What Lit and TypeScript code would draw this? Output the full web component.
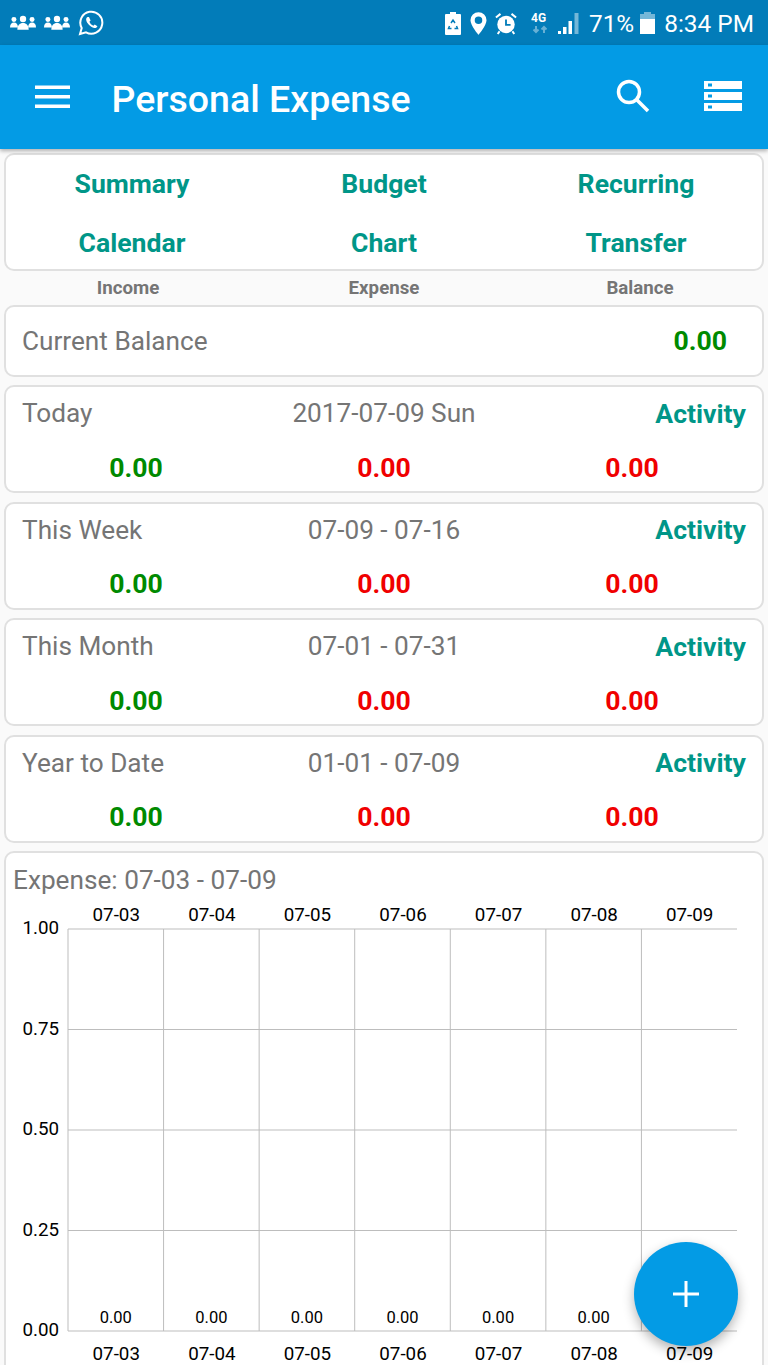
import { LitElement, html, css, svg } from "lit";
import { customElement } from "lit/decorators.js";

const NAV = ["Summary", "Budget", "Recurring", "Calendar", "Chart", "Transfer"];

const PERIODS = [
  { name: "Today", range: "2017-07-09 Sun" },
  { name: "This Week", range: "07-09 - 07-16" },
  { name: "This Month", range: "07-01 - 07-31" },
  { name: "Year to Date", range: "01-01 - 07-09" },
];

const DAYS = ["07-03", "07-04", "07-05", "07-06", "07-07", "07-08", "07-09"];
const TICKS = ["1.00", "0.75", "0.50", "0.25", "0.00"];

// chart coordinates are relative to the svg, which starts at the card's left edge
const PLOT = { left: 64, right: 733, top: 34, bottom: 436 };

const people = (x: number) => svg`
  <g transform="translate(${x} 0)" fill="#fff">
    <circle cx="3.5" cy="4" r="2.2" /><path d="M0 11c0-3 1.5-4.5 3.500-4.500S7 8 7 11z" />
    <circle cx="19.500" cy="4" r="2.200" /><path d="M16 11c0-3 1.500-4.500 3.500-4.500S23 8 23 11z" />
    <circle cx="11.500" cy="3.500" r="2.800" /><path d="M6.500 13c0-4 2-6 5-6s5 2 5 6z" />
  </g>
`;

@customElement("app-root")
export class AppRoot extends LitElement {
  static styles = css`
    :host {
      display: block;
      position: relative;
      width: 768px;
      height: 1365px;
      overflow: hidden;
      background: #fafafa;
      font-family: Roboto, "Liberation Sans", sans-serif;
    }
    .status {
      height: 45px;
      background: #027cb9;
      color: #fff;
      display: flex;
      align-items: center;
      padding: 0 14px 0 10px;
    }
    .status-left {
      display: flex;
      align-items: center;
      gap: 8px;
    }
    .status-right {
      margin-left: auto;
      padding-top: 1px;
      display: flex;
      align-items: center;
      font-size: 24.4px;
      white-space: nowrap;
    }
    .status svg {
      display: block;
    }
    .gap-6 {
      margin-left: 6px;
    }
    .gap-8 {
      margin-left: 8px;
    }
    .gap-9 {
      margin-left: 9px;
    }
    .gap-10 {
      margin-left: 10px;
    }
    .gap-14 {
      margin-left: 14px;
    }
    .toolbar {
      height: 104px;
      background: #039be5;
      color: #fff;
      display: flex;
      align-items: center;
      padding: 0 26px 0 35px;
      box-shadow: 0 2px 4px rgba(0, 0, 0, 0.3);
      position: relative;
    }
    .toolbar h1 {
      margin: 4px 0 0 41.5px;
      font-size: 37.5px;
      font-weight: 500;
      flex: 1;
    }
    .toolbar svg {
      display: block;
    }
    .search {
      margin: 0 54px 3px 0;
    }
    .servers {
      margin-bottom: 2px;
    }
    .content {
      padding: 4px 4px 0;
      display: flex;
      flex-direction: column;
    }
    .card {
      box-sizing: border-box;
      background: #fff;
      border: 2px solid #e0e0e0;
      border-radius: 10px;
    }
    .nav {
      height: 118px;
      display: grid;
      grid-template-columns: repeat(3, 1fr);
      grid-template-rows: 52px 52px;
      row-gap: 7px;
      padding-top: 2px;
      align-items: center;
      justify-items: center;
      color: #009688;
      font-size: 26.6px;
      font-weight: 700;
    }
    .labels {
      height: 34px;
      display: grid;
      grid-template-columns: 248px 264px 248px;
      align-items: center;
      justify-items: center;
      color: #757575;
      font-size: 18.7px;
      font-weight: 700;
    }
    .balance {
      height: 71.5px;
      display: flex;
      align-items: center;
      justify-content: space-between;
      padding: 0 35px 0 16px;
      color: #757575;
      font-size: 26.2px;
    }
    .balance .green {
      font-size: 26.6px;
    }
    .green {
      color: #008a00;
      font-weight: 700;
    }
    .red {
      color: #f00000;
      font-weight: 700;
    }
    .period {
      height: 108px;
      margin-top: 8.5px;
      display: grid;
      grid-template-columns: 1fr 1fr 1fr;
      grid-template-rows: 48px 48px;
      row-gap: 6px;
      padding: 2px 6px 0;
      align-items: center;
      color: #757575;
      font-size: 26.2px;
    }
    .period .activity {
      justify-self: end;
      padding-right: 10px;
      color: #009688;
      font-size: 26.6px;
      font-weight: 700;
    }
    .period .mid {
      justify-self: center;
      white-space: nowrap;
    }
    .period .val {
      justify-self: center;
      font-size: 26.6px;
    }
    .period .name {
      padding-left: 10px;
      white-space: nowrap;
    }
    .chart {
      margin-top: 8.5px;
      height: 540px;
    }
    .chart h2 {
      margin: 0;
      padding: 12px 0 0 7px;
      font-size: 26.2px;
      font-weight: 400;
      color: #757575;
      line-height: 30px;
    }
    .chart svg {
      display: block;
      margin-left: -2px;
      overflow: visible;
    }
    .chart text {
      font-family: Roboto, "Liberation Sans", sans-serif;
      font-size: 18.8px;
      fill: #000;
    }
    .chart .small {
      font-size: 16.5px;
    }
    .fab {
      position: absolute;
      left: 634px;
      top: 1242px;
      width: 104px;
      height: 104px;
      border-radius: 50%;
      background: #039be5;
      box-shadow: 0 5px 12px rgba(0, 0, 0, 0.3);
      display: flex;
      align-items: center;
      justify-content: center;
    }
  `;

  renderChart() {
    const { left, right, top, bottom } = PLOT;
    const step = (right - left) / DAYS.length;
    const rowStep = (bottom - top) / (TICKS.length - 1);
    return svg`
      <svg width="760" height="480">
        ${TICKS.map((t, i) => {
          const y = top + i * rowStep;
          return svg`
            <line x1=${left} x2=${right} y1=${y} y2=${y} stroke="#bdbdbd" />
            <text x="55" y=${y + 5} text-anchor="end">${t}</text>
          `;
        })}
        ${DAYS.map((d, i) => {
          const x = left + i * step;
          const mid = x + step / 2;
          return svg`
            <line x1=${x} x2=${x} y1=${top} y2=${bottom} stroke="#bdbdbd" />
            <text x=${mid + 0.5} y=${top - 8} text-anchor="middle">${d}</text>
            <text x=${mid + 0.5} y=${bottom + 28.5} text-anchor="middle">${d}</text>
            <text class="small" x=${mid} y=${bottom - 8} text-anchor="middle">0.00</text>
          `;
        })}
      </svg>
    `;
  }

  render() {
    return html`
      <div class="status">
        <div class="status-left">
          <svg width="60" height="16" viewBox="0 0 53 14">${people(0)}${people(30)}</svg>
          <svg width="26" height="26" viewBox="0 0 26 26" fill="none" stroke="#fff">
            <path stroke-width="2" d="M2 24l1.700-6A11 11 0 1 1 8 22.300z" />
            <path
              fill="#fff"
              stroke="none"
              d="M9.500 7c-1 .5-1.500 1.500-1.300 3 .5 3 4 7 8 8 1.500.3 2.800-.5 3.200-1.800l-2.700-1.700-1.300 1.200c-1.800-.7-3.300-2.300-4-4l1.200-1.200L11 7z"
            />
          </svg>
        </div>
        <div class="status-right">
          <svg width="16" height="23" viewBox="0 0 16 23">
            <path
              fill="#fff"
              d="M5 0h6v2h4a1 1 0 0 1 1 1v19a1 1 0 0 1-1 1H1a1 1 0 0 1-1-1V3a1 1 0 0 1 1-1h4z"
            />
            <path
              fill="none"
              stroke="#027cb9"
              stroke-width="1.500"
              d="M6 11l2-3 2 3M4.500 14l-1 2.500h3M11.500 14l1 2.500h-3"
            />
          </svg>
          <svg class="gap-9" width="17" height="23" viewBox="0 0 18 24">
            <path
              fill="#fff"
              fill-rule="evenodd"
              d="M9 0a8.500 8.500 0 0 1 8.500 8.500C17.500 14 9 24 9 24S.5 14 .5 8.500A8.500 8.500 0 0 1 9 0zm0 4.500a4 4 0 1 0 0 8 4 4 0 0 0 0-8z"
            />
          </svg>
          <svg class="gap-8" width="22" height="23" viewBox="0 0 24 25">
            <circle cx="12" cy="13.500" r="9.500" fill="#fff" />
            <path d="M12 8v6h5" fill="none" stroke="#027cb9" stroke-width="2" />
            <path
              d="M1 6l5-4M23 6l-5-4M5 21l-2 3M19 21l2 3"
              stroke="#fff"
              stroke-width="2.200"
              fill="none"
            />
          </svg>
          <svg class="gap-14" width="18" height="24" viewBox="0 0 18 24">
            <text x="0" y="11" fill="#fff" font-size="12" font-weight="700" font-family="Roboto">4G</text>
            <path d="M5 15v6M2.500 18.500 5 21l2.500-2.500" stroke="#fff" stroke-opacity=".4" stroke-width="2" fill="none" />
            <path d="M13 22v-6M10.500 18.500 13 16l2.500 2.500" stroke="#fff" stroke-opacity=".4" stroke-width="2" fill="none" />
          </svg>
          <svg class="gap-9" width="21" height="24" viewBox="0 0 21 24">
            <rect x="0" y="20" width="3" height="3" fill="#fff" />
            <rect x="5" y="16" width="3.500" height="7" fill="#fff" />
            <rect x="10.500" y="10" width="3.500" height="13" fill="#fff" />
            <rect x="16.500" y="2" width="4" height="21" fill="#fff" fill-opacity=".45" />
          </svg>
          <span class="gap-10">71%</span>
          <svg class="gap-6" width="15" height="22" viewBox="0 0 15 22">
            <path d="M4 0h7v2h4v5H0V2h4z" fill="#fff" fill-opacity=".45" />
            <rect x="0" y="7" width="15" height="15" fill="#fff" />
          </svg>
          <span class="gap-9">8:34 PM</span>
        </div>
      </div>

      <div class="toolbar">
        <svg width="35" height="24" viewBox="0 0 35 24" fill="#fff">
          <rect y="0.500" width="35" height="3.500" />
          <rect y="10" width="35" height="3.500" />
          <rect y="19.500" width="35" height="3.500" />
        </svg>
        <h1>Personal Expense</h1>
        <svg class="search" width="34" height="34" viewBox="0 0 34 34" fill="none" stroke="#fff">
          <circle cx="13" cy="13" r="10.500" stroke-width="3.500" />
          <path d="M21 21l11 11" stroke-width="3.500" />
        </svg>
        <svg class="servers" width="38" height="30" viewBox="0 0 38 30">
          <g fill="#fff">
            <rect y="0" width="38" height="8" />
            <rect y="11" width="38" height="8" />
            <rect y="22" width="38" height="8" />
          </g>
          <g fill="#039be5">
            <rect x="4" y="2.500" width="4" height="3" />
            <rect x="4" y="13.500" width="4" height="3" />
            <rect x="4" y="24.500" width="4" height="3" />
          </g>
        </svg>
      </div>

      <div class="content">
        <div class="card nav">${NAV.map((n) => html`<span>${n}</span>`)}</div>
        <div class="labels"><span>Income</span><span>Expense</span><span>Balance</span></div>
        <div class="card balance"><span>Current Balance</span><span class="green">0.00</span></div>
        ${PERIODS.map(
          (p) => html`
            <div class="card period">
              <span class="name">${p.name}</span>
              <span class="mid">${p.range}</span>
              <span class="activity">Activity</span>
              <span class="val green">0.00</span>
              <span class="val red">0.00</span>
              <span class="val red">0.00</span>
            </div>
          `,
        )}
        <div class="card chart">
          <h2>Expense: 07-03 - 07-09</h2>
          ${this.renderChart()}
        </div>
      </div>

      <div class="fab">
        <svg width="26" height="26" viewBox="0 0 26 26" fill="#fff">
          <rect x="11.500" y="0" width="3" height="26" />
          <rect x="0" y="11.500" width="26" height="3" />
        </svg>
      </div>
    `;
  }
}
